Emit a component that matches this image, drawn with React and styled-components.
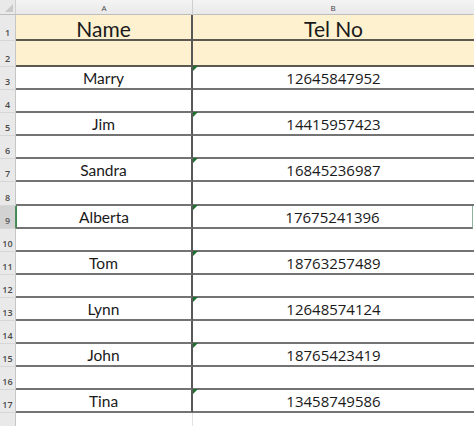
import React from "react";
import styled, { createGlobalStyle } from "styled-components";

const GlobalStyle = createGlobalStyle`
  html, body { margin: 0; padding: 0; background: #ffffff; }
  body { width: 474px; height: 426px; overflow: hidden; }
`;

const rows = [
  { name: "Name", tel: "Tel No", head: true },
  { head: true },
  { name: "Marry", tel: "12645847952" },
  {},
  { name: "Jim", tel: "14415957423" },
  {},
  { name: "Sandra", tel: "16845236987" },
  {},
  { name: "Alberta", tel: "17675241396", selected: true },
  {},
  { name: "Tom", tel: "18763257489" },
  {},
  { name: "Lynn", tel: "12648574124" },
  {},
  { name: "John", tel: "18765423419" },
  {},
  { name: "Tina", tel: "13458749586" },
];

const Sheet = styled.div`
  display: grid;
  grid-template-columns: 16px 177px 1fr;
  grid-template-rows: 15px 26px 26px repeat(15, 23.1px) 1fr;
  width: 474px;
  height: 426px;
  font-family: "Lato", "Open Sans", sans-serif;
  color: #1a1a1a;
`;

const Corner = styled.div`
  position: relative;
  background: #e9e9e9;
  border-right: 1px solid #cfcfcf;
  border-bottom: 1px solid #bdbdbd;
  &::after {
    content: "";
    position: absolute;
    right: 2px;
    bottom: 2px;
    border-left: 8px solid transparent;
    border-bottom: 8px solid #c9c9c9;
  }
`;

const ColHead = styled.div`
  display: flex;
  align-items: center;
  justify-content: center;
  background: linear-gradient(#f4f4f4, #e9e9e9);
  border-right: 1px solid ${({ last }) => (last ? "transparent" : "#cfcfcf")};
  border-bottom: 1px solid #bdbdbd;
  font-family: "Open Sans", sans-serif;
  font-size: 8px;
  color: #444;
  padding-top: 1px;
`;

const RowHead = styled.div`
  display: flex;
  align-items: flex-end;
  justify-content: center;
  padding-bottom: 1px;
  background: ${({ selected }) => (selected ? "#d2d2d2" : "#e9e9e9")};
  border-bottom: 1px solid #d6d6d6;
  border-right: 1px solid ${({ selected }) => (selected ? "#4f8a5f" : "#c6c6c6")};
  font-family: "Open Sans", sans-serif;
  font-weight: 600;
  font-size: 9px;
  color: ${({ selected }) => (selected ? "#5a5a5a" : "#4a4a4a")};
`;

const Cell = styled.div`
  position: relative;
  display: flex;
  align-items: center;
  justify-content: center;
  box-sizing: border-box;
  background: ${({ head }) => (head ? "#fdf1cf" : "#ffffff")};
  border-bottom: 2px solid ${({ head }) => (head ? "#5a5850" : "#737373")};
  border-right: ${({ first, selected }) =>
    first ? "2px solid #585858" : selected ? "1px solid #8fb29a" : "none"};
  border-left: ${({ first, selected }) =>
    first && selected ? "1px solid #3f8a52" : "none"};
  margin-right: ${({ first, selected }) => (!first && selected ? "1px" : "0")};
  font-family: ${({ digits }) =>
    digits ? '"Open Sans", sans-serif' : '"Lato", "Open Sans", sans-serif'};
  font-size: ${({ big, digits }) => (big ? "21px" : digits ? "15px" : "15.5px")};
  padding-top: ${({ big }) => (big ? "2px" : "1px")};
  &::before {
    content: "";
    display: ${({ flag }) => (flag ? "block" : "none")};
    position: absolute;
    left: 0;
    top: -1px;
    border-top: 5px solid #1f6e2f;
    border-right: 5px solid transparent;
  }
`;

const Blank = styled.div`
  border-right: ${({ first }) => (first ? "1px solid #e2e2e2" : "none")};
`;

const BlankHead = styled.div`
  background: #e9e9e9;
  border-right: 1px solid #c6c6c6;
`;

export default function App() {
  return (
    <>
      <GlobalStyle />
      <Sheet>
        <Corner />
        <ColHead>A</ColHead>
        <ColHead last>B</ColHead>
        {rows.map((r, i) => (
          <React.Fragment key={i}>
            <RowHead selected={r.selected}>{i + 1}</RowHead>
            <Cell first head={r.head} big={r.head} selected={r.selected}>
              {r.name}
            </Cell>
            <Cell
              head={r.head}
              big={r.head}
              selected={r.selected}
              digits={!r.head}
              flag={!r.head && r.tel}
            >
              {r.tel}
            </Cell>
          </React.Fragment>
        ))}
        <BlankHead />
        <Blank first />
        <Blank />
      </Sheet>
    </>
  );
}
